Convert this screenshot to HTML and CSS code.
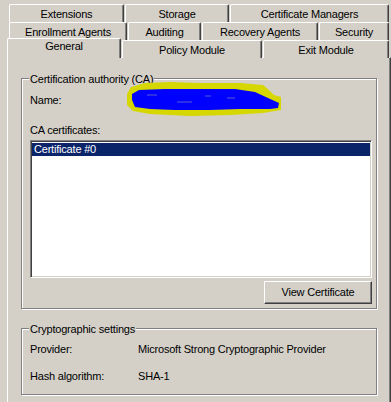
FILE: index.html
```html
<!DOCTYPE html>
<html>
<head>
<meta charset="utf-8">
<link rel="stylesheet" href="styles.css">
</head>
<body>
<div class="tabs">
  <div class="tab-row">
    <div class="tab w-ext">Extensions</div>
    <div class="tab w-sto">Storage</div>
    <div class="tab w-cm">Certificate Managers</div>
  </div>
  <div class="tab-row">
    <div class="tab w-enr">Enrollment Agents</div>
    <div class="tab w-aud">Auditing</div>
    <div class="tab w-rec">Recovery Agents</div>
    <div class="tab w-sec">Security</div>
  </div>
  <div class="tab-row">
    <div class="tab sel w-gen">General</div>
    <div class="tab w-pol">Policy Module</div>
    <div class="tab w-exit">Exit Module</div>
  </div>
</div>
<div class="panel">
  <div class="group group-ca">
    <div class="legend">Certification authority (CA)</div>
    <div class="field name">Name:</div>
    <svg class="redact" viewBox="0 0 155 35" aria-hidden="true">
      <polygon fill="#d6d600" points="0,12 4,5 18,1 43,0 73,1 113,1 136,3 142,8 147,13 154,15 154,28 136,31 103,33 63,34 23,32 6,29 0,23"/>
      <polygon fill="#0000ff" points="5,12 12,8 38,7 73,7 108,7 128,10 141,16 152,21 151,26 143,27 113,27 83,28 48,28 23,27 8,25 5,18"/>
      <path d="M20 13 h10 M50 20 h15 M78 14 h6 M100 16 h8" stroke="#5a5ad0" stroke-width="1" fill="none"/>
    </svg>
    <div class="field ca-label">CA certificates:</div>
    <div class="listbox">
      <div class="item selected">Certificate #0</div>
    </div>
    <button class="btn" type="button">View Certificate</button>
  </div>
  <div class="group group-crypto">
    <div class="legend">Cryptographic settings</div>
    <div class="props">
      <span>Provider:</span><span>Microsoft Strong Cryptographic Provider</span>
      <span>Hash algorithm:</span><span>SHA-1</span>
    </div>
  </div>
</div>
</body>
</html>
```
FILE: styles.css
```css
* { box-sizing: border-box; }
html, body { margin: 0; padding: 0; }
body {
  background: #d4d0c8;
  font-family: "Liberation Sans", Arial, sans-serif;
  font-size: 11px;
  line-height: 13px;
  letter-spacing: -0.2px;
  color: #000;
  width: 391px;
  height: 402px;
  overflow: hidden;
}

.tabs { padding-top: 4px; margin-bottom: -1px; }
.tab-row { display: flex; gap: 1px; padding-left: 9px; height: 18px; }
.tab {
  height: 18px;
  border-top: 1px solid #fff;
  border-left: 1px solid #fff;
  border-right: 1px solid #404040;
  box-shadow: inset -1px 0 #808080;
  border-radius: 2px 2px 0 0;
  background: #d4d0c8;
  text-align: center;
  padding-top: 2px;
  line-height: 14px;
  white-space: nowrap;
}
.tab.sel {
  position: relative;
  z-index: 1;
  height: 20px;
  margin-top: -2px;
  margin-left: -2px;
  padding-top: 0;
}
.w-ext { width: 115px; }
.w-sto { width: 104px; }
.w-cm { width: 159px; }
.w-enr { width: 118px; }
.w-aud { width: 73px; }
.w-rec { width: 116px; }
.w-sec { width: 70px; }
.w-gen { width: 114px; }
.w-pol { width: 140px; }
.w-exit { width: 126px; }

.panel {
  margin-left: 7px;
  width: 384px;
  height: 345px;
  border-top: 1px solid #fff;
  border-left: 1px solid #fff;
  border-right: 1px solid #404040;
  box-shadow: inset -1px 0 #808080;
  padding: 20px 13px 0;
}

.group {
  position: relative;
  border: 1px solid #808080;
  box-shadow: inset 1px 1px #fff, 1px 1px #fff;
  padding: 0 4px 4px 8px;
}
.group-crypto { margin-top: 19px; padding-bottom: 11px; }

.legend {
  display: block;
  width: max-content;
  margin: -6px 0 0 -1px;
  padding: 0 1px;
  background: #d4d0c8;
}

.field { margin-top: 8px; }
.ca-label { margin-top: 17px; }

.redact {
  position: absolute;
  left: 105px;
  top: 3px;
  width: 155px;
  height: 35px;
}

.listbox {
  margin-top: 3px;
  height: 138px;
  background: #fff;
  border: 1px solid;
  border-color: #808080 #fff #fff #808080;
  box-shadow: inset 1px 1px #404040, inset -1px -1px #d4d0c8;
  padding: 2px 1px 1px 1px;
}
.item { height: 13px; padding-left: 2px; white-space: nowrap; }
.item.selected { background: #0a246a; color: #fff; }

.btn {
  display: flex;
  align-items: center;
  justify-content: center;
  width: 108px;
  height: 23px;
  margin: 3px 0 0 auto;
  padding: 0;
  border: 1px solid;
  border-color: #fff #404040 #404040 #fff;
  box-shadow: inset -1px -1px #808080;
  background: #d4d0c8;
  font: inherit;
  letter-spacing: inherit;
  color: #000;
}

.props {
  display: grid;
  grid-template-columns: 108px auto;
  row-gap: 14px;
  margin-top: 7px;
}
```
